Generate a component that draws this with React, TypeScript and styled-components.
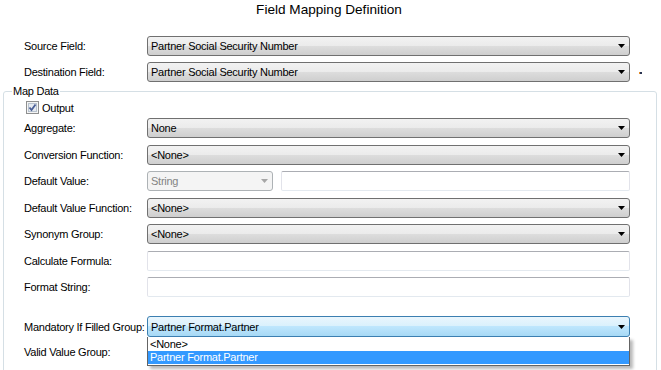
import React from "react";
import styled, { createGlobalStyle, css } from "styled-components";

const Global = createGlobalStyle`
  html, body { margin: 0; padding: 0; background: #ffffff; }
  body { font-family: "Liberation Sans", Arial, sans-serif; }
`;

const Page = styled.div`
  width: 661px;
  height: 370px;
  overflow: hidden;
  background: #ffffff;
  color: #000000;
  font-family: "Liberation Sans", Arial, sans-serif;
  font-size: 11px;
  letter-spacing: -0.25px;
`;

const Title = styled.div`
  height: 20px;
  line-height: 20px;
  text-align: center;
  font-size: 13.6px;
  letter-spacing: 0;
  padding-right: 3px;
`;

const TopSection = styled.div`
  margin-top: 16px;
  padding-left: 24px;
  display: flex;
  flex-direction: column;
  gap: 6px;
`;

const Row = styled.div<{ $mt?: number; $h?: number }>`
  display: flex;
  align-items: center;
  height: ${(p) => p.$h ?? 20}px;
  margin-top: ${(p) => p.$mt ?? 0}px;
  position: relative;
`;

const Label = styled.div`
  width: 123px;
  flex: none;
  white-space: nowrap;
`;

type Variant = "normal" | "hot" | "disabled";

const ComboBox = styled.div<{ $variant?: Variant; $w?: number }>`
  box-sizing: border-box;
  width: ${(p) => p.$w ?? 483}px;
  height: ${(p) => (p.$variant === "hot" ? 21 : 20)}px;
  border-radius: 3px;
  display: flex;
  align-items: center;
  padding: 0 4px 0 3px;
  flex: none;
  ${(p) =>
    p.$variant === "hot"
      ? css`
          border: 1px solid #3c7fb1;
          background: linear-gradient(#eaf6fd 0%, #d9f0fc 50%, #bee6fd 50%, #a7d9f5 100%);
        `
      : p.$variant === "disabled"
      ? css`
          border: 1px solid #adb2b5;
          background: #f4f4f4;
          color: #838383;
        `
      : css`
          border: 1px solid #707070;
          background: linear-gradient(#f2f2f2 0%, #ebebeb 50%, #dddddd 50%, #cfcfcf 100%);
        `}
`;

const ComboText = styled.span`
  flex: 1;
  white-space: nowrap;
  overflow: hidden;
`;

const TextBox = styled.div<{ $w?: number; $ml?: number }>`
  box-sizing: border-box;
  width: ${(p) => p.$w ?? 483}px;
  margin-left: ${(p) => p.$ml ?? 0}px;
  height: 20px;
  flex: none;
  background: #ffffff;
  border: 1px solid #e2e3ea;
  border-top-color: #abadb3;
  border-bottom-color: #e3e9ef;
  border-radius: 2px;
`;

const Marker = styled.span`
  width: 3px;
  height: 2px;
  margin-left: 9px;
  margin-top: 1px;
  background: linear-gradient(90deg, #e08a2a 0 33%, #2a3350 33% 100%);
`;

const Group = styled.div`
  position: relative;
  margin: 9px 0 0 3px;
  width: 654px;
  height: 400px;
  box-sizing: border-box;
  border: 1px solid #d5dfe5;
  border-radius: 3px;
  padding: 9px 0 0 20px;
`;

const Legend = styled.span`
  position: absolute;
  top: -8px;
  left: 8px;
  padding: 0 1px 0 1px;
  background: #ffffff;
  line-height: 14px;
`;

const CheckRow = styled.div`
  display: flex;
  align-items: center;
  height: 13px;
  gap: 3px;
  padding-left: 2px;
`;

const FieldList = styled.div`
  display: flex;
  flex-direction: column;
  gap: 6.5px;
  margin-top: 4px;
`;

const DropList = styled.div`
  position: absolute;
  top: 21px;
  left: 123px;
  width: 483px;
  box-sizing: border-box;
  background: #ffffff;
  border: 1px solid #646464;
  border-top: none;
  box-shadow: 3px 3px 3px rgba(0, 0, 0, 0.28);
  padding: 1px 0 1px 0;
  z-index: 2;
`;

const DropItem = styled.div<{ $selected?: boolean }>`
  height: 13px;
  line-height: 13px;
  padding-left: 2px;
  white-space: nowrap;
  ${(p) =>
    p.$selected &&
    css`
      background: #3399ff;
      color: #ffffff;
    `}
`;

const Arrow = ({ color = "#000" }: { color?: string }) => (
  <svg width="7" height="4" viewBox="0 0 7 4" style={{ flex: "none" }}>
    <polygon points="0,0 7,0 3.5,4" fill={color} />
  </svg>
);

const Combo = ({
  text,
  variant = "normal",
  w,
}: {
  text: string;
  variant?: Variant;
  w?: number;
}) => (
  <ComboBox $variant={variant} $w={w}>
    <ComboText>{text}</ComboText>
    <Arrow color={variant === "disabled" ? "#a6a6a6" : "#000"} />
  </ComboBox>
);

const CheckBox = () => (
  <svg width="13" height="13" viewBox="0 0 13 13">
    <rect x="0.5" y="0.5" width="12" height="12" fill="#f4f4f4" stroke="#8e8f8f" />
    <rect x="2.5" y="2.5" width="8" height="8" fill="#e6eaf0" stroke="#b8c3cf" />
    <path d="M3.5 6.5 L5.5 9 L9.5 3.5" fill="none" stroke="#4a5f97" strokeWidth="1.8" />
  </svg>
);

export default function App() {
  return (
    <Page>
      <Global />
      <Title>Field Mapping Definition</Title>
      <TopSection>
        <Row>
          <Label>Source Field:</Label>
          <Combo text="Partner Social Security Number" />
        </Row>
        <Row>
          <Label>Destination Field:</Label>
          <Combo text="Partner Social Security Number" />
          <Marker />
        </Row>
      </TopSection>
      <Group>
        <Legend>Map Data</Legend>
        <CheckRow>
          <CheckBox />
          <span>Output</span>
        </CheckRow>
        <FieldList>
          <Row>
            <Label>Aggregate:</Label>
            <Combo text="None" />
          </Row>
          <Row>
            <Label>Conversion Function:</Label>
            <Combo text="<None>" />
          </Row>
          <Row>
            <Label>Default Value:</Label>
            <Combo text="String" variant="disabled" w={126} />
            <TextBox $w={349} $ml={8} />
          </Row>
          <Row>
            <Label>Default Value Function:</Label>
            <Combo text="<None>" />
          </Row>
          <Row>
            <Label>Synonym Group:</Label>
            <Combo text="<None>" />
          </Row>
          <Row>
            <Label>Calculate Formula:</Label>
            <TextBox />
          </Row>
          <Row>
            <Label>Format String:</Label>
            <TextBox />
          </Row>
          <Row $mt={12.5} $h={21}>
            <Label>Mandatory If Filled Group:</Label>
            <Combo text="Partner Format.Partner" variant="hot" />
            <DropList>
              <DropItem>&lt;None&gt;</DropItem>
              <DropItem $selected>Partner Format.Partner</DropItem>
            </DropList>
          </Row>
          <Row $mt={-1.5}>
            <Label>Valid Value Group:</Label>
            <Combo text="" />
          </Row>
        </FieldList>
      </Group>
    </Page>
  );
}
